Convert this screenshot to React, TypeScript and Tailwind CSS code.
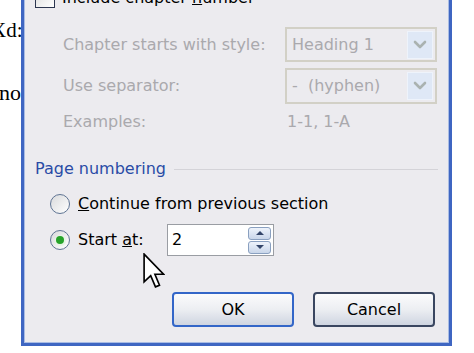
import React from "react";

const Chevron = () => (
  <svg width="14" height="10" viewBox="0 0 14 10">
    <path d="M2 2 L7 7 L12 2" fill="none" stroke="#aab2b0" strokeWidth="2.6" strokeLinecap="round" strokeLinejoin="round" />
  </svg>
);

const Combo = ({ text }: { text: string }) => (
  <div className="flex items-center w-[152px] h-full border-2 border-[#d2d0c6] bg-[#ecebef] pl-[5px] pr-[2px] box-border">
    <span className="flex-1 text-[#aaa9ad] whitespace-pre">{text}</span>
    <div className="w-[26px] h-[28px] bg-[#dfe8f6] border border-[#eef3fb] flex items-center justify-center">
      <Chevron />
    </div>
  </div>
);

const Radio = ({ checked }: { checked?: boolean }) => (
  <div className="w-[20px] h-[20px] rounded-full border-[1.5px] border-[#5f7493] bg-gradient-to-br from-[#d9dadc] to-[#ffffff] flex items-center justify-center">
    {checked && (
      <div className="w-[11px] h-[11px] rounded-full bg-[#e6f4e4] flex items-center justify-center">
        <div className="w-[8px] h-[8px] rounded-full bg-[#26a32a]" />
      </div>
    )}
  </div>
);

const SpinBtn = ({ up }: { up?: boolean }) => (
  <div className="w-[23px] h-[13px] rounded-[3px] border border-[#8aa0c0] bg-gradient-to-b from-[#eef3fb] to-[#c9d6ea] flex items-center justify-center">
    <svg width="10" height="6" viewBox="0 0 10 6">
      {up ? <path d="M1 5 L5 1 L9 5 Z" fill="#34466a" /> : <path d="M1 1 L5 5 L9 1 Z" fill="#34466a" />}
    </svg>
  </div>
);

export default function App() {
  return (
    <div
      className="relative w-[474px] h-[353px] overflow-hidden bg-white flex"
      style={{ fontFamily: '"DejaVu Sans", Verdana, sans-serif' }}
    >
      {/* document behind */}
      <div className="w-[21px] shrink-0 overflow-hidden text-black" style={{ fontFamily: '"Liberation Serif", serif' }}>
        <div className="ml-[-9px] mt-[18px] text-[21px] leading-[24px] whitespace-nowrap">Xd:</div>
        <div className="ml-[-1px] mt-[39px] text-[22px] leading-[24px] whitespace-nowrap">no</div>
      </div>

      {/* dialog */}
      <div className="w-[431px] h-[346px] shrink-0 border-l-[3px] border-r-[3px] border-b-[3px] border-[#3f66c2] box-border">
        <div className="w-full h-full border-l border-r border-b border-[#a9bce4] bg-[#ecebef] text-[16px] text-black flex flex-col pl-[10px] box-border">
          {/* include chapter number */}
          <div className="mt-[-12px] h-[20px] flex items-center">
            <div className="w-[20px] h-[20px] border-[1.5px] border-[#2c3650] bg-gradient-to-br from-[#dcdcdc] to-white" />
            <span className="ml-[7px] text-black whitespace-nowrap">
              Include chapter <span className="underline">n</span>umber
            </span>
          </div>

          {/* chapter starts */}
          <div className="mt-[19px] h-[35px] flex items-center">
            <span className="w-[250px] pl-[28px] text-[#aaa9ad] whitespace-nowrap">Chapter starts with style:</span>
            <Combo text="Heading 1" />
          </div>

          <div className="mt-[6px] h-[36px] flex items-center">
            <span className="w-[250px] pl-[28px] text-[#aaa9ad] whitespace-nowrap">Use separator:</span>
            <Combo text="-  (hyphen)" />
          </div>

          <div className="mt-[8px] h-[20px] flex items-center">
            <span className="w-[252px] pl-[28px] text-[#aaa9ad] whitespace-nowrap">Examples:</span>
            <span className="text-[#aaa9ad]">1-1, 1-A</span>
          </div>

          {/* page numbering */}
          <div className="mt-[27px] h-[20px] flex items-center pr-[10px]">
            <span className="text-[#2a4ba6] whitespace-nowrap">Page numbering</span>
            <div className="flex-1 ml-[8px] h-px bg-[#d4d3d8]" />
          </div>

          <div className="mt-[15px] h-[20px] flex items-center pl-[15px]">
            <Radio />
            <span className="ml-[8px] whitespace-nowrap">
              <span className="underline">C</span>ontinue from previous section
            </span>
          </div>

          <div className="mt-[10px] h-[32px] flex items-center pl-[15px]">
            <Radio checked />
            <span className="ml-[8px] w-[89px] whitespace-nowrap">
              Start <span className="underline">a</span>t:
            </span>
            <div className="w-[107px] h-[32px] border border-[#9a9da3] bg-white flex items-center pl-[4px] pr-[2px] box-border">
              <span className="flex-1">2</span>
              <div className="flex flex-col gap-[1px]">
                <SpinBtn up />
                <SpinBtn />
              </div>
            </div>
          </div>

          {/* buttons */}
          <div className="mt-[36px] h-[35px] flex items-center pl-[137px] gap-[19px]">
            <div className="w-[122px] h-[35px] rounded-[4px] border-2 border-[#3366c8] bg-gradient-to-b from-[#fbfbfc] via-[#eceef2] to-[#cfd5e1] flex items-center justify-center box-border">
              OK
            </div>
            <div className="w-[122px] h-[35px] rounded-[4px] border-2 border-[#3a4660] bg-gradient-to-b from-[#fbfbfc] via-[#eceef2] to-[#cfd5e1] flex items-center justify-center box-border">
              Cancel
            </div>
          </div>
        </div>
      </div>

      {/* mouse cursor */}
      <svg className="absolute left-[143px] top-[253px]" width="22" height="36" viewBox="0 0 12 20" preserveAspectRatio="none">
        <path d="M0.6 0.6 L0.6 16 L4.2 12.6 L6.8 18.8 L9 17.9 L6.5 11.8 L11.2 11.8 Z" fill="white" stroke="black" strokeWidth="0.9" strokeLinejoin="miter" />
      </svg>
    </div>
  );
}
